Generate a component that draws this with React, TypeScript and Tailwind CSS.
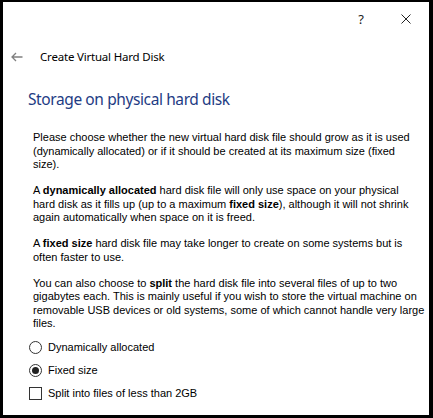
import React from "react";

const body = { fontFamily: '"Liberation Sans", sans-serif' };

export default function App() {
  return (
    <div className="w-[433px] h-[418px] bg-black pt-[2px] pl-[3px] pr-[4px] pb-[3px]">
      <div className="w-full h-full bg-white flex flex-col" style={{ fontFamily: '"Noto Sans", sans-serif' }}>
        <div className="flex justify-end items-center h-[32px] pr-[18px] gap-[37px] text-[#222]">
          <span className="text-[13px] leading-none mt-[2px]">?</span>
          <svg width="10" height="10" viewBox="0 0 10 10" className="mt-[2px]">
            <path d="M0.5 0.5 L9.5 9.5 M9.5 0.5 L0.5 9.5" stroke="#222" strokeWidth="1" />
          </svg>
        </div>
        <div className="flex items-center h-[30px] mt-[8px]">
          <svg width="12" height="10" viewBox="0 0 12 10" className="ml-[8px]">
            <path d="M1 5 H11.5 M5 1 L1 5 L5 9" stroke="#808080" strokeWidth="1.3" fill="none" />
          </svg>
          <span className="ml-[17px] text-[11.5px] tracking-[-0.2px] text-black">Create Virtual Hard Disk</span>
        </div>
        <div className="ml-[25px] mt-[16px] text-[15.5px] tracking-[-0.4px] text-[#1e3c84]">Storage on physical hard disk</div>
        <div className="ml-[30px] mt-[20px] text-[11px] leading-[13.3px] text-black whitespace-nowrap flex flex-col gap-[13.2px]" style={body}>
          <p>
            Please choose whether the new virtual hard disk file should grow as it is used<br />
            (dynamically allocated) or if it should be created at its maximum size (fixed<br />
            size).
          </p>
          <p>
            A <b>dynamically allocated</b> hard disk file will only use space on your physical<br />
            hard disk as it fills up (up to a maximum <b>fixed size</b>), although it will not shrink<br />
            again automatically when space on it is freed.
          </p>
          <p>
            A <b>fixed size</b> hard disk file may take longer to create on some systems but is<br />
            often faster to use.
          </p>
          <p>
            You can also choose to <b>split</b> the hard disk file into several files of up to two<br />
            gigabytes each. This is mainly useful if you wish to store the virtual machine on<br />
            removable USB devices or old systems, some of which cannot handle very large<br />
            files.
          </p>
        </div>
        <div className="ml-[26px] mt-[10px] flex flex-col gap-[9px] text-[11px] text-black" style={body}>
          <div className="flex items-center h-[14px]">
            <span className="w-[13px] h-[13px] rounded-full border border-[#333] bg-white" />
            <span className="ml-[6px]">Dynamically allocated</span>
          </div>
          <div className="flex items-center h-[14px]">
            <span className="w-[13px] h-[13px] rounded-full border border-[#333] bg-white flex items-center justify-center">
              <span className="w-[7px] h-[7px] rounded-full bg-[#222]" />
            </span>
            <span className="ml-[6px]">Fixed size</span>
          </div>
          <div className="flex items-center h-[14px]">
            <span className="w-[13px] h-[13px] border border-[#333] bg-white" />
            <span className="ml-[6px]">Split into files of less than 2GB</span>
          </div>
        </div>
      </div>
    </div>
  );
}
